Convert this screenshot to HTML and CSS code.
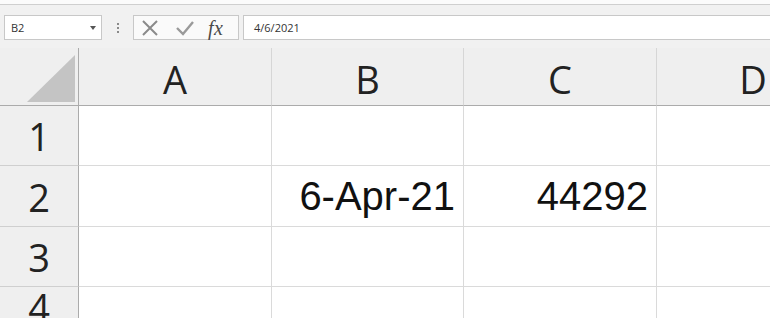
FILE: index.html
```
<!DOCTYPE html>
<html>
<head>
<meta charset="utf-8">
<link rel="stylesheet" href="styles.css">
</head>
<body>
<div class="app">
  <div class="ribbon-edge"></div>
  <div class="formula-bar">
    <div class="name-box">
      <span class="name-text">B2</span>
      <span class="caret"></span>
    </div>
    <div class="grip"><i></i><i></i><i></i></div>
    <div class="fx-buttons">
      <svg class="ico" width="18" height="18" viewBox="0 0 18 18"><path d="M2 2 L16 16 M16 2 L2 16" stroke="#8a8a8a" stroke-width="2" fill="none"/></svg>
      <svg class="ico" width="20" height="18" viewBox="0 0 20 18"><path d="M2 9 L8 15 L18 3" stroke="#9a9a9a" stroke-width="2.4" fill="none"/></svg>
      <span class="fx">fx</span>
    </div>
    <div class="formula-input">4/6/2021</div>
  </div>
  <div class="sheet">
    <div class="corner"><span class="tri"></span></div>
    <div class="colhead">A</div>
    <div class="colhead">B</div>
    <div class="colhead">C</div>
    <div class="colhead">D</div>

    <div class="rowhead">1</div>
    <div class="cell"></div>
    <div class="cell"></div>
    <div class="cell"></div>
    <div class="cell"></div>

    <div class="rowhead">2</div>
    <div class="cell"></div>
    <div class="cell num">6-Apr-21</div>
    <div class="cell num">44292</div>
    <div class="cell"></div>

    <div class="rowhead">3</div>
    <div class="cell"></div>
    <div class="cell"></div>
    <div class="cell"></div>
    <div class="cell"></div>

    <div class="rowhead">4</div>
    <div class="cell"></div>
    <div class="cell"></div>
    <div class="cell"></div>
    <div class="cell"></div>
  </div>
</div>
</body>
</html>
```
FILE: styles.css
```
html, body {
  margin: 0;
  padding: 0;
  width: 770px;
  height: 318px;
  overflow: hidden;
  background: #ffffff;
}
.app {
  width: 770px;
  height: 318px;
  overflow: hidden;
  font-family: "Open Sans", "Noto Sans", sans-serif;
}
.ribbon-edge {
  height: 4px;
  background: #fbfbfb;
  border-bottom: 1px solid #cfcfcf;
}
.formula-bar {
  height: 43px;
  background: #f1f1f1;
  display: flex;
  align-items: flex-start;
  padding-top: 10px;
  box-sizing: border-box;
}
.name-box {
  margin-left: 4px;
  width: 98px;
  height: 25px;
  box-sizing: border-box;
  background: #fff;
  border: 1px solid #c8c8c8;
  display: flex;
  align-items: center;
  justify-content: space-between;
  padding: 0 5px 0 6px;
}
.name-text {
  font-size: 11px;
  color: #333;
}
.caret {
  width: 0;
  height: 0;
  border-left: 3.5px solid transparent;
  border-right: 3.5px solid transparent;
  border-top: 4px solid #555;
}
.grip {
  width: 31px;
  height: 25px;
  display: flex;
  flex-direction: column;
  align-items: center;
  justify-content: center;
  gap: 2px;
}
.grip i {
  display: block;
  width: 2px;
  height: 2px;
  background: #8a8a8a;
}
.fx-buttons {
  width: 106px;
  height: 25px;
  box-sizing: border-box;
  background: #fafafa;
  border: 1px solid #c8c8c8;
  display: flex;
  align-items: center;
  padding-left: 7px;
  gap: 16px;
}
.fx {
  font-family: "Liberation Serif", "DejaVu Serif", serif;
  font-style: italic;
  font-size: 20px;
  color: #4a4a4a;
  margin-left: -3px;
  letter-spacing: 0.5px;
  line-height: 1;
}
.formula-input {
  margin-left: 4px;
  flex: 1;
  height: 25px;
  box-sizing: border-box;
  background: #fff;
  border: 1px solid #c8c8c8;
  border-right: none;
  font-size: 11px;
  color: #333;
  line-height: 23px;
  padding-left: 10px;
}
.sheet {
  display: grid;
  grid-template-columns: 79px 193px 192px 193px 193px;
  grid-template-rows: 58px 60px 61px 60px 40px;
  width: 850px;
}
.corner {
  background: #efefef;
  border-right: 1px solid #ababab;
  border-bottom: 1px solid #ababab;
  position: relative;
}
.tri {
  position: absolute;
  right: 3px;
  bottom: 3px;
  width: 0;
  height: 0;
  border-left: 48px solid transparent;
  border-bottom: 47px solid #c4c4c4;
}
.colhead {
  background: #efefef;
  border-right: 1px solid #d6d6d6;
  border-bottom: 1px solid #ababab;
  display: flex;
  align-items: center;
  justify-content: center;
  font-size: 38px;
  color: #222;
  padding-top: 4px;
  box-sizing: border-box;
}
.rowhead {
  background: #efefef;
  border-right: 1px solid #ababab;
  border-bottom: 1px solid #cfcfcf;
  display: flex;
  align-items: center;
  justify-content: center;
  font-size: 38px;
  color: #222;
  padding-top: 1px;
  box-sizing: border-box;
}
.cell {
  background: #fff;
  border-right: 1px solid #dadada;
  border-bottom: 1px solid #dadada;
}
.num {
  font-family: "Liberation Sans", Arial, sans-serif;
  font-size: 40px;
  color: #111;
  display: flex;
  align-items: center;
  justify-content: flex-end;
  padding-right: 8px;
  box-sizing: border-box;
}
```
